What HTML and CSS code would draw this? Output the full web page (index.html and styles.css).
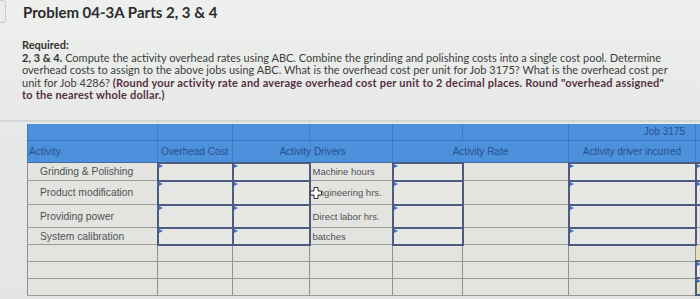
FILE: index.html
```html
<!DOCTYPE html>
<html>
<head>
<meta charset="utf-8">
<link rel="stylesheet" href="styles.css">
</head>
<body>
<div class="page">
  <div class="top">
    <div class="edge-box"></div>
    <h1 class="title">Problem 04-3A Parts 2, 3 &amp; 4</h1>
  </div>
  <div class="req">
    <div class="req-label">Required:</div>
    <p class="req-text"><b>2, 3 &amp; 4.</b> Compute the activity overhead rates using ABC. Combine the grinding and polishing costs into a single cost pool. Determine overhead costs to assign to the above jobs using ABC. What is the overhead cost per unit for Job 3175? What is the overhead cost per unit for Job 4286? <span class="note">(Round your activity rate and average overhead cost per unit to 2 decimal places. Round "overhead assigned" to the nearest whole dollar.)</span></p>
  </div>
  <div class="table-wrap">
    <table class="grid">
      <colgroup>
        <col class="c1"><col class="c2"><col class="c3"><col class="c4"><col class="c5"><col class="c6"><col class="c7"><col class="c8">
      </colgroup>
      <thead>
        <tr class="h1">
          <th></th><th></th><th></th><th></th><th></th><th></th><th class="right">Job 3175</th><th></th>
        </tr>
        <tr class="h2">
          <th class="left">Activity</th>
          <th class="left">Overhead Cost</th>
          <th colspan="2">Activity Drivers</th>
          <th colspan="2">Activity Rate</th>
          <th>Activity driver incurred</th>
          <th></th>
        </tr>
      </thead>
      <tbody>
        <tr class="r1">
          <td class="act">Grinding &amp; Polishing</td>
          <td class="in"></td><td class="in"></td>
          <td class="drv">Machine hours</td>
          <td class="in"></td><td></td><td class="in"></td><td class="in"></td>
        </tr>
        <tr class="r2">
          <td class="act">Product modification</td>
          <td class="in"></td><td class="in"></td>
          <td class="drv"><span class="cur-wrap"><svg class="cursor" width="12" height="12" viewBox="0 0 12 12"><path d="M4 0.5h4v3.5h3.5v4H8v3.5H4V8H0.5V4H4z" fill="#fff" stroke="#333" stroke-width="1"/></svg></span>Engineering hrs.</td>
          <td class="in"></td><td></td><td class="in"></td><td class="in"></td>
        </tr>
        <tr class="r3">
          <td class="act">Providing power</td>
          <td class="in"></td><td class="in"></td>
          <td class="drv">Direct labor hrs.</td>
          <td class="in"></td><td></td><td class="in"></td><td></td>
        </tr>
        <tr class="r4">
          <td class="act">System calibration</td>
          <td class="in"></td><td class="in"></td>
          <td class="drv">batches</td>
          <td class="in"></td><td></td><td class="in"></td><td></td>
        </tr>
        <tr class="r5"><td></td><td></td><td></td><td></td><td></td><td></td><td></td><td class="hl"></td></tr>
        <tr class="r6"><td></td><td></td><td></td><td></td><td></td><td></td><td></td><td class="in"></td></tr>
        <tr class="r7"><td></td><td></td><td></td><td></td><td></td><td></td><td></td><td class="in hl"></td></tr>
      </tbody>
    </table>
  </div>
</div>
</body>
</html>
```

FILE: styles.css
```css
html, body {
  margin: 0;
  padding: 0;
}
body {
  width: 700px;
  height: 299px;
  overflow: hidden;
  background: linear-gradient(180deg, #eef0ee 0%, #e7e9e7 40%, #e4e6e3 100%);
  font-family: "Lato", "Liberation Sans", sans-serif;
}
.top {
  display: flex;
  align-items: flex-start;
  height: 30px;
}
.edge-box {
  width: 10px;
  height: 21px;
  margin-left: -6px;
  border: 1px solid #c9ccca;
  border-radius: 3px;
  background: #eaecea;
}
.title {
  margin: 3px 0 0 17px;
  font-size: 15px;
  line-height: 18px;
  font-weight: 700;
  color: #2a2b2d;
}
.req {
  padding: 9px 0 0 22px;
  width: 650px;
  color: #3d3e40;
  font-size: 11px;
  line-height: 12.4px;
}
.req-label {
  font-weight: 700;
  color: #333;
  line-height: 12px;
  margin-bottom: 1px;
}
.req-text {
  margin: 0;
}
.req-text b {
  color: #333;
}
.note {
  font-weight: 700;
  color: #553043;
  letter-spacing: 0.22px;
}
.table-wrap {
  margin-top: 18px;
  padding-left: 27px;
  border-top: 2px solid #d2d5d6;
  padding-top: 2px;
  width: 800px;
}
.grid {
  table-layout: fixed;
  border-collapse: collapse;
  width: 720px;
  font-family: "Liberation Sans", Arial, sans-serif;
  font-size: 9.5px;
  background: #e3e3df;
}
.c1 { width: 130px; }
.c2 { width: 75px; }
.c3 { width: 77px; }
.c4 { width: 83px; }
.c5 { width: 70px; }
.c6 { width: 106px; }
.c7 { width: 127px; }
.c8 { width: 52px; }
th {
  background: #4d90dc;
  color: #25508f;
  font-size: 10px;
  font-weight: 400;
  border-left: 1px solid #3f7cc6;
  border-bottom: 1px solid #3a76c0;
  padding: 0 4px;
  text-align: center;
  white-space: nowrap;
}
th.left { text-align: left; padding-left: 3px; }
th.right { text-align: right; padding-right: 10px; }
.h1 th { height: 16px; }
.h2 th { height: 21px; border-bottom: 1px solid #4a6a98; }
.h2 th:first-child { text-align: left; padding-left: 1px; }
td {
  border-left: 1px solid #8e9093;
  border-bottom: 1px solid #9a9c9e;
  padding: 0;
  color: #4f5256;
  white-space: nowrap;
}
.r1 td { height: 16px; }
.r2 td { height: 22px; }
.r3 td { height: 21px; }
.r4 td { height: 15px; }
.r5 td, .r6 td, .r7 td { height: 15px; }
td.act { padding-left: 12px; font-size: 10.3px; }
td.drv { padding-left: 2px; }
td.in {
  border: 2px solid #4d5b83;
  background: #e7e7e3;
  position: relative;
}
td.in::before {
  content: "";
  position: absolute;
  left: 0;
  top: 0;
  border-left: 4px solid #3c6fc8;
  border-top: 2px solid transparent;
  border-bottom: 2px solid transparent;
}
td.hl { background: #e6dfb8; }
.cur-wrap {
  position: relative;
  display: inline-block;
  width: 0;
}
.cursor {
  position: absolute;
  left: -3px;
  top: -9px;
}
```
